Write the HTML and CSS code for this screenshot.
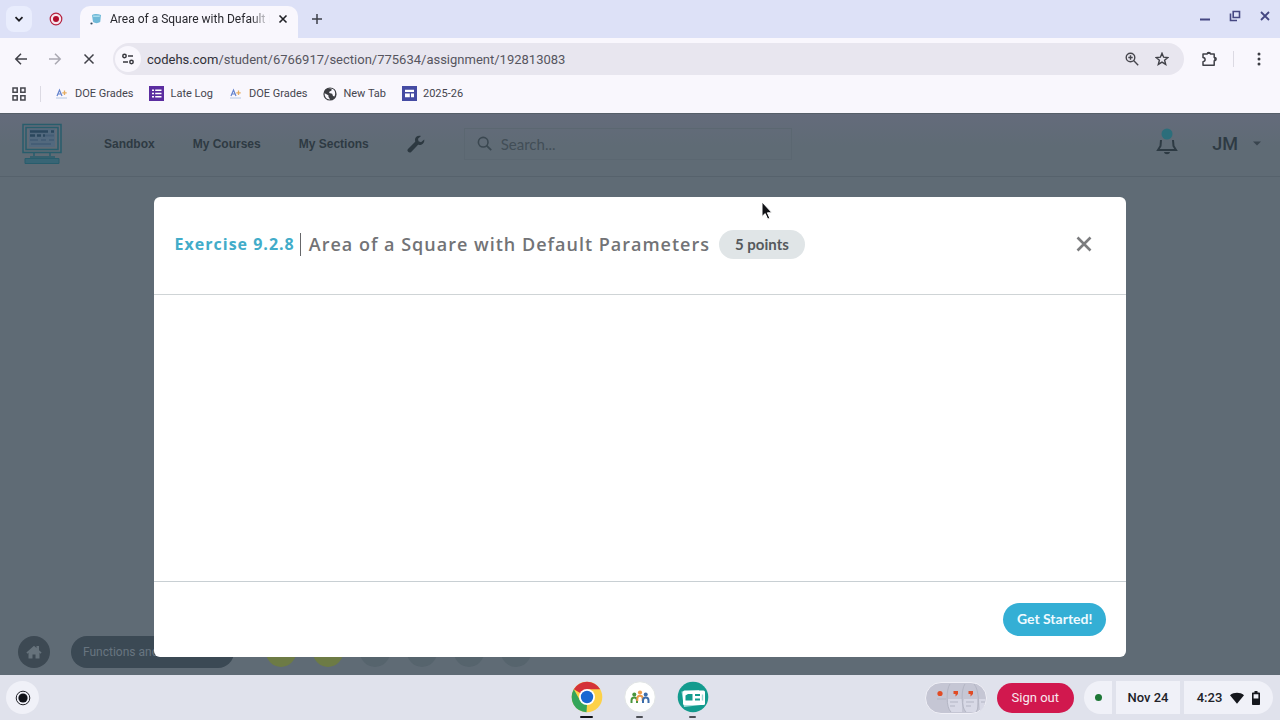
FILE: index.html
```html
<!DOCTYPE html>
<html lang="en">
<head>
<meta charset="utf-8">
<meta name="viewport" content="width=device-width, initial-scale=1">
<title>Area of a Square with Default Parameters</title>
<link rel="stylesheet" href="styles.css">
</head>
<body>
<header class="browser">
  <div class="tabstrip">
    <button class="tab-search" aria-label="Search tabs"><svg width="10" height="10" viewBox="0 0 10 10"><path d="M1.5 3.2 5 6.7 8.5 3.2" fill="none" stroke="#1d1d22" stroke-width="1.7"/></svg></button>
    <button class="pinned" aria-label="Recording"><svg width="14" height="14" viewBox="0 0 14 14"><circle cx="7" cy="7" r="5.8" fill="#f7e6ee" stroke="#b5223f" stroke-width="1.2"/><circle cx="7" cy="7" r="3" fill="#b00d2c"/></svg></button>
    <div class="tab">
      <svg width="12" height="12" viewBox="0 0 12 12"><path d="M2 2.2C4 .8 8 .8 11 2L10.2 9C8 10.5 5 10.5 3 9Z" fill="#70b9d8"/><path d="M3 2.6 10 2.4 9.6 4 3.2 4Z" fill="#a9dcec"/><circle cx="1.5" cy="10.5" r="1.1" fill="#35495c"/></svg>
      <span class="tab-title">Area of a Square with Default Parameters</span>
      <button aria-label="Close tab"><svg width="10" height="10" viewBox="0 0 10 10"><path d="M1.5 1.5 8.5 8.5M8.5 1.5 1.5 8.5" stroke="#202126" stroke-width="1.6"/></svg></button>
    </div>
    <button class="new-tab" aria-label="New tab"><svg width="12" height="12" viewBox="0 0 12 12"><path d="M6 1V11M1 6H11" stroke="#3d3f49" stroke-width="1.5"/></svg></button>
    <div class="window-controls">
      <button aria-label="Minimize"><svg width="12" height="12" viewBox="0 0 12 12"><path d="M1 9.5H11" stroke="#454782" stroke-width="2"/></svg></button>
      <button aria-label="Restore"><svg width="12" height="12" viewBox="0 0 12 12"><path d="M4.2 1.5H10.5V7.5H4.2ZM1.5 3.5V10.5H8" fill="none" stroke="#454782" stroke-width="1.6"/></svg></button>
      <button aria-label="Close"><svg width="12" height="12" viewBox="0 0 12 12"><path d="M2 2 10 10M10 2 2 10" stroke="#454782" stroke-width="1.8"/></svg></button>
    </div>
  </div>
  <div class="toolbar">
    <div class="history">
      <button aria-label="Back"><svg width="14" height="14" viewBox="0 0 14 14"><path d="M13 7H2M7 1.8 1.8 7 7 12.2" fill="none" stroke="#404148" stroke-width="1.5"/></svg></button>
      <button aria-label="Forward"><svg width="14" height="14" viewBox="0 0 14 14"><path d="M1 7H12M7 1.8 12.2 7 7 12.2" fill="none" stroke="#aaa9b2" stroke-width="1.5"/></svg></button>
      <button aria-label="Stop"><svg width="14" height="14" viewBox="0 0 14 14"><path d="M2.5 2.5 11.5 11.5M11.5 2.5 2.5 11.5" stroke="#404148" stroke-width="1.5"/></svg></button>
    </div>
    <div class="omnibox">
      <button class="site-info" aria-label="Site information"><svg width="14" height="14" viewBox="0 0 14 14"><g fill="none" stroke="#38393f" stroke-width="1.5"><circle cx="3.5" cy="4" r="1.7"/><path d="M7 4H12M2 10H7"/><circle cx="10.5" cy="10" r="1.7"/></g></svg></button>
      <p class="url"><b>codehs.com</b>/student/6766917/section/775634/assignment/192813083</p>
      <button aria-label="Zoom"><svg width="14" height="14" viewBox="0 0 14 14"><g fill="none" stroke="#46464d" stroke-width="1.4"><circle cx="5.5" cy="5.5" r="4.3"/><path d="M8.6 8.6 13.2 13.2M5.5 3.3V7.7M3.3 5.5H7.7"/></g></svg></button>
      <button aria-label="Bookmark this tab"><svg width="14" height="14" viewBox="0 0 14 14"><path d="M7 1.3 8.6 5.2 12.9 5.5 9.6 8.2 10.7 12.4 7 10.1 3.3 12.4 4.4 8.2 1.1 5.5 5.4 5.2Z" fill="none" stroke="#404148" stroke-width="1.4"/></svg></button>
    </div>
    <button class="extensions" aria-label="Extensions"><svg width="17" height="16" viewBox="0 0 17 16"><path d="M2 3H6.2C6.2 .9 9.4 .9 9.4 3H13.2V6.5C15.7 6.5 15.7 9.7 13.2 9.7V14.2H2V10.7C4.8 10.4 4.8 6.8 2 6.5Z" fill="none" stroke="#404148" stroke-width="1.5" stroke-linejoin="round"/><path d="M6.3 3C6.3 .6 9.3 .6 9.3 3ZM13.2 6.6C15.8 6.6 15.8 9.6 13.2 9.6Z" fill="#404148"/></svg></button>
    <i class="rule"></i>
    <button class="menu" aria-label="Browser menu"><svg width="4" height="14" viewBox="0 0 4 14" fill="#3c3d43"><circle cx="2" cy="2" r="1.5"/><circle cx="2" cy="7" r="1.5"/><circle cx="2" cy="12" r="1.5"/></svg></button>
  </div>
  <nav class="bookmarks" aria-label="Bookmarks">
    <button class="apps" aria-label="Apps"><svg width="14" height="14" viewBox="0 0 14 14"><path d="M1 1H5.2V5.2H1ZM8.8 1H13V5.2H8.8ZM1 8.8H5.2V13H1ZM8.8 8.8H13V13H8.8Z" fill="none" stroke="#46474e" stroke-width="1.5"/></svg></button>
    <i class="rule"></i>
    <a href="#"><svg width="14" height="14" viewBox="0 0 14 14"><path d="M2 9 4.5 3 7 9M3 7H6" fill="none" stroke="#6483cd" stroke-width="1.2"/><path d="M9.5 3.5V8M7.3 5.8H11.7" stroke="#e5ad62" stroke-width="1.3"/><path d="M1 11H12" stroke="#b4c8e3"/></svg>DOE Grades</a>
    <a href="#"><svg width="15" height="15" viewBox="0 0 15 15"><path fill="#5b2da0" d="M0 0H15V15H0Z"/><path d="M3 4.2H5M6.2 4.2H12.5M3 7.5H5M6.2 7.5H12.5M3 10.8H5M6.2 10.8H12.5" stroke="#fff" stroke-width="1.6"/></svg>Late Log</a>
    <a href="#"><svg width="14" height="14" viewBox="0 0 14 14"><path d="M2 9 4.5 3 7 9M3 7H6" fill="none" stroke="#6483cd" stroke-width="1.2"/><path d="M9.5 3.5V8M7.3 5.8H11.7" stroke="#e5ad62" stroke-width="1.3"/><path d="M1 11H12" stroke="#b4c8e3"/></svg>DOE Grades</a>
    <a href="#"><svg width="14" height="14" viewBox="0 0 14 14"><circle cx="7" cy="7" r="6.6" fill="#3c3d42"/><path d="M1.6 6.2 5.4 8.2 5.5 10 7.2 12.4C4 12.6 1.4 10 1.6 6.2ZM5 2 8.7 1.6 8.4 3.8 6.5 4.4 6.2 6 9.2 6.8 10 9 11.4 9.6C13 6.6 12 3 9.7 2" fill="#f9f7fd"/></svg>New Tab</a>
    <a href="#"><svg width="15" height="15" viewBox="0 0 15 15"><path fill="#454ba3" d="M0 0H15V15H0Z"/><path fill="#fff" d="M3 3.8H12V6H3ZM3 7.5H7.8V11.3H3ZM9 7.5H12V11.3H9Z"/></svg>2025-26</a>
  </nav>
</header>

<main class="page">
  <header class="site-header">
    <a class="logo" href="#" aria-label="CodeHS"><svg width="42" height="42" viewBox="0 0 42 42"><g fill="none" stroke="#285d6c" stroke-width="1.5"><path d="M2 1.5H40V29.5H2ZM5 4.5H37V26.5H5ZM13 30V33M29 30V33M9 34H34"/></g><path d="M8 6H34V24H8Z" fill="#52697e"/><path d="M9 8.5H27M30 8.5H33M9 12.5H14M16 12.5H20M22 12.5H24" stroke="#2b475d" stroke-width="2.4"/><path d="M24 12.5H33M9 17H17M20 17H25M28 17H33M10 21H30" stroke="#455e76" stroke-width="2"/><path d="M4 35.5H38V40.5H4Z" fill="#386575" stroke="#285d6c"/></svg></a>
    <nav class="site-nav" aria-label="Main">
      <a href="#">Sandbox</a>
      <a href="#">My Courses</a>
      <a href="#">My Sections</a>
      <a href="#" aria-label="Tools"><svg width="18" height="18" viewBox="0 0 18 18"><path d="M17.2 4.5 14 7.2 11.5 6.2 11 3.8 14 1.1C11.4-.1 8.1 1.6 8 4.6L8.2 6.8 1 13.9C-.9 16 2.2 18.9 4.2 17L11.1 9.8C14.6 10.6 17.9 8.1 17.2 4.5ZM3 15.8 2 14.9" fill="#2c3840"/></svg></a>
    </nav>
    <label class="search">
      <svg width="15" height="15" viewBox="0 0 15 15"><circle cx="6.2" cy="6.2" r="4.8" fill="none" stroke="#3b4851" stroke-width="1.6"/><path d="M9.6 9.6 14.2 14.2" stroke="#3b4851" stroke-width="1.8"/></svg>
      <input type="search" placeholder="Search..." aria-label="Search">
    </label>
    <button class="alerts" aria-label="Notifications"><svg width="22" height="28" viewBox="0 0 22 28"><path d="M5 12 4.5 18 2 22H20L17.5 18 17 12" fill="none" stroke="#2d3a43" stroke-width="2"/><path d="M8 24H14C13.5 27 8.5 27 8 24Z" fill="#2d3a43"/><circle cx="11" cy="6" r="5.5" fill="#2c6e7b"/></svg></button>
    <button class="account">JM<svg width="8" height="5" viewBox="0 0 8 5"><path d="M0 .5H8L4 4.5Z" fill="#39454e"/></svg></button>
  </header>
  <footer class="lesson-bar">
    <a class="home" href="#" aria-label="Home"><svg width="16" height="14" viewBox="0 0 16 14"><path d="M8 .8 10.5 3V1H13V5.3L15.6 7.5 14.6 8.7 13.5 7.8V13.5H9.5V9.5H6.5V13.5H2.5V7.8L1.4 8.7.4 7.5Z" fill="#66727b"/></svg></a>
    <a class="lesson" href="#">Functions and Parameters</a>
    <div class="steps"><i class="step done"></i><i class="step done"></i><i class="step"></i><i class="step"></i><i class="step"></i><i class="step"></i></div>
  </footer>
  <div class="overlay">
    <section class="modal" role="dialog" aria-labelledby="exercise-title">
      <header class="modal-header">
        <span class="exercise">Exercise 9.2.8</span>
        <h1 id="exercise-title">Area of a Square with Default Parameters</h1>
        <span class="points">5 points</span>
        <button class="dismiss" aria-label="Close dialog"><svg width="16" height="16" viewBox="0 0 16 16"><path d="M1.5 1.5 14.5 14.5M14.5 1.5 1.5 14.5" stroke="#7b7c7e" stroke-width="2.6"/></svg></button>
      </header>
      <div class="modal-body"></div>
      <footer class="modal-footer"><button class="start">Get Started!</button></footer>
    </section>
  </div>
  <svg class="cursor" width="14" height="20" viewBox="0 0 14 20"><path d="M2 1V15.5L5.2 12.6 7.7 18.2 9.8 17.2 7.4 11.8H12Z" fill="#111216" stroke="#fff"/></svg>
</main>

<footer class="shelf">
  <button class="launcher" aria-label="Launcher"><svg width="16" height="16" viewBox="0 0 16 16"><circle cx="8" cy="8" r="6.8" fill="none" stroke="#202128"/><circle cx="8" cy="8" r="4.6" fill="#101218"/></svg></button>
  <div class="shelf-apps">
    <button class="app active" aria-label="Chrome"><svg width="32" height="32" viewBox="0 0 32 32"><circle cx="16" cy="16" r="15.3" fill="#fcd148"/><path d="M16 16 2.8 8.2A15.3 15.3 0 0 1 29.2 8.2H16Z" fill="#d43238"/><path d="M2.8 8.2 9.3 20 16 23.5 15.5 31.3A15.3 15.3 0 0 1 2.8 8.2Z" fill="#34a55a"/><circle cx="16" cy="16" r="8" fill="#fff"/><circle cx="16" cy="16" r="6.2" fill="#1967d2"/></svg></button>
    <button class="app" aria-label="Class tools"><svg width="32" height="32" viewBox="0 0 32 32"><circle cx="16" cy="16" r="15.3" fill="#fff" stroke="#e0e4e5"/><g fill="none" stroke-width="2"><path d="M7.5 22V19.5C7.5 15.5 13 15.5 13 19.5V22" stroke="#4a963d"/><path d="M13.3 20V17.8C13.3 13.8 18.7 13.8 18.7 17.8V20" stroke="#ec9b4a"/><path d="M19 22V19.5C19 15.5 24.5 15.5 24.5 19.5V22" stroke="#3c6dab"/></g><circle cx="10.3" cy="13.4" r="2" fill="#4a963d"/><circle cx="16" cy="11.5" r="2.1" fill="#ec9b4a"/><circle cx="21.7" cy="13.4" r="2" fill="#3c6dab"/></svg></button>
    <button class="app" aria-label="Screencast"><svg width="32" height="32" viewBox="0 0 32 32"><circle cx="16" cy="16" r="15.3" fill="#139b8e"/><path d="M4.5 10.5 22 9 24 24 7 26Z" fill="#a9dfdc"/><rect x="6" y="9.5" width="22" height="14.5" rx="1.5" fill="#fff"/><path d="M8.5 14.5 11 13H15.5V19.5H8.5Z" fill="#139b8e"/><path d="M18 14H23M18 18.5H23" stroke="#139b8e" stroke-width="2"/><path d="M25.5 13.5V19.5" stroke="#9bd6d1" stroke-width="1.4"/></svg></button>
  </div>
  <div class="status">
    <button class="previews" aria-label="Recent files"><svg width="64" height="32" viewBox="0 0 64 32"><rect x=".5" y=".5" width="61" height="31" rx="15.5" fill="#c5c6d4" stroke="#f0f0f7"/><path d="M23 17H37V30H26C23 26 22 22 23 17ZM39 17H52V30H41C38 26 38 22 39 17ZM54 17H60.5C60 24 58 27 55 29Z" fill="#d8d9e6"/><path d="M25 2C21 7 21 26 26 30M40 2C36 7 36 26 41 30M49 2C54 7 55 26 51 30" fill="none" stroke="#b4b6c4"/><path d="M12 17H21M25 20H33M25 24H30M41 20H49M41 24H46M56 20H60" stroke="#b3b5c4"/><g fill="#e14b24"><circle cx="15" cy="11.5" r="2.6"/><path d="M28.5 9H33V12L30.5 14.5V12H28.5ZM43.5 9H48V12L45.5 14.5V12H43.5Z"/></g></svg></button>
    <button class="sign-out">Sign out</button>
    <div class="tray">
      <button class="mic" aria-label="Camera in use"><i></i></button>
      <button class="date">Nov 24</button>
      <button class="clock">4:23<svg width="14" height="12" viewBox="0 0 14 12"><path d="M0 3.2C4 0 10 0 14 3.2L7 11.7Z" fill="#15171d"/></svg><svg width="8" height="14" viewBox="0 0 8 14"><path d="M2.5 0H5.5V1.5H7.2Q8 1.5 8 2.3V13.2Q8 14 7.2 14H.8Q0 14 0 13.2V2.3Q0 1.5.8 1.5H2.5ZM1.6 3.2V7.5H6.4V3.2Z" fill="#15171d" fill-rule="evenodd"/></svg></button>
    </div>
  </div>
</footer>
</body>
</html>
```
FILE: styles.css
```css
* { box-sizing: border-box; }
body {
  margin: 0;
  min-height: 100vh;
  display: flex;
  flex-direction: column;
  font-family: Roboto, "Liberation Sans", sans-serif;
  font-size: 12px;
  color: #45454e;
  background: #f9f7fd;
}
button {
  display: flex;
  align-items: center;
  justify-content: center;
  padding: 0;
  border: 0;
  background: none;
  color: inherit;
  font: inherit;
}
a { color: inherit; text-decoration: none; }
svg { flex: none; display: block; }
.rule { width: 1px; height: 16px; background: #dcdae3; }

/* Browser frame */
.tabstrip {
  display: flex;
  align-items: center;
  height: 38px;
  padding: 0 9px 0 6px;
  background: #dde1f7;
}
.tab-search {
  width: 26px;
  height: 26px;
  border-radius: 8px;
  background: #e9edfd;
}
.pinned { width: 48px; height: 26px; }
.tab {
  align-self: flex-end;
  display: flex;
  align-items: center;
  gap: 8px;
  width: 218px;
  height: 32px;
  padding: 0 10px 6px;
  border-radius: 10px 10px 0 0;
  background: #f9f7fd;
}
.tab-title {
  flex: 1;
  overflow: hidden;
  white-space: nowrap;
  color: #28282e;
  mask-image: linear-gradient(90deg, #000 88%, transparent);
}
.new-tab { width: 38px; height: 26px; }
.window-controls { display: flex; gap: 18px; margin-left: auto; padding-bottom: 6px; }
.toolbar {
  display: flex;
  align-items: center;
  height: 42px;
  padding: 0 19px 0 14px;
}
.history { display: flex; gap: 20px; margin-right: 17px; }
.omnibox {
  flex: 1;
  display: flex;
  align-items: center;
  gap: 16px;
  height: 32px;
  padding: 0 15px 0 2px;
  border-radius: 16px;
  background: #e8e6ef;
}
.site-info { width: 26px; height: 26px; border-radius: 50%; background: #f9f7fd; }
.url { flex: 1; margin: 0 0 0 -10px; font-size: 13px; color: #56555e; }
.url b { font-weight: 400; color: #303038; }
.extensions { margin: 0 15px 0 17px; }
.menu { margin-left: 23px; }
.bookmarks {
  display: flex;
  align-items: center;
  gap: 14px;
  height: 33px;
  padding: 0 12px 6px;
  font-size: 11px;
}
.bookmarks a { display: flex; align-items: center; gap: 6px; }
.bookmarks a + a { margin-left: 2px; }

/* Page behind the dialog */
.page {
  position: relative;
  flex: 1;
  display: flex;
  flex-direction: column;
  justify-content: space-between;
  background: #5f6b75;
  border-top: 1px solid #565f69;
}
.site-header {
  display: flex;
  align-items: center;
  height: 63px;
  padding: 0 19px 3px 21px;
  border-bottom: 1px solid #56626c;
  background: linear-gradient(#646b7b, #5f6b75 32px);
  color: #2e3a43;
}
.site-nav {
  display: flex;
  align-items: center;
  gap: 38px;
  margin-left: 41px;
  font: bold 12px "Liberation Sans", Arial, sans-serif;
}
.search {
  display: flex;
  align-items: center;
  gap: 9px;
  width: 328px;
  height: 32px;
  margin-left: 39px;
  padding: 0 12px;
  border: 1px solid #5b6771;
}
.search input {
  flex: 1;
  min-width: 0;
  padding: 0;
  border: 0;
  outline: 0;
  background: none;
  font: 15px Lato, sans-serif;
}
.search input::placeholder { color: #424e57; opacity: 1; }
.alerts { margin: 0 34px 4px auto; }
.account { gap: 15px; font-size: 18px; font-weight: 500; }
.lesson-bar {
  display: flex;
  align-items: center;
  padding: 0 18px 7px;
}
.home {
  display: flex;
  align-items: center;
  justify-content: center;
  width: 32px;
  height: 32px;
  border-radius: 50%;
  background: #3d4953;
}
.lesson {
  width: 163px;
  margin-left: 21px;
  padding: 0 12px;
  border-radius: 16px;
  background: #3b4954;
  color: #687580;
  line-height: 32px;
  white-space: nowrap;
}
.steps { display: flex; gap: 17px; margin-left: 32px; }
.step { width: 30px; height: 30px; border-radius: 50%; background: #56646d; }
.step.done { background: #6d7b45; }

/* Exercise dialog */
.overlay {
  position: absolute;
  inset: 0;
  display: flex;
  justify-content: center;
  padding: 83px 12% 18px;
}
.modal {
  flex: 1;
  display: flex;
  flex-direction: column;
  border-radius: 6px;
  background: #fff;
  font-family: Lato, sans-serif;
}
.modal-header {
  display: flex;
  align-items: center;
  height: 98px;
  padding: 0 34px 2px 21px;
  border-bottom: 1px solid #cfd4d6;
}
.exercise, .modal h1 {
  font-family: "Open Sans", sans-serif;
  line-height: 23px;
  letter-spacing: 1px;
}
.exercise {
  padding-right: 5px;
  border-right: 1px solid #66676a;
  color: #42acc9;
  font-size: 16px;
  font-weight: 700;
}
.modal h1 {
  margin: 0 9px 0 8px;
  color: #727376;
  font-size: 18px;
  font-weight: 600;
}
.points {
  padding: 0 16px;
  border-radius: 15px;
  background: #e0e5e7;
  color: #55595c;
  font-size: 15px;
  font-weight: 700;
  line-height: 29px;
}
.dismiss { margin: 0 0 2px auto; }
.modal-body { flex: 1; min-height: 120px; }
.modal-footer {
  display: flex;
  align-items: center;
  justify-content: flex-end;
  height: 76px;
  padding: 0 20px;
  border-top: 1px solid #c8cfd3;
}
.start {
  height: 33px;
  padding: 0 14px 2px;
  border-radius: 17px;
  background: #34afd5;
  color: #eefaff;
  font-size: 14px;
  font-weight: 700;
}
.cursor { position: absolute; left: 760px; top: 87px; }

/* System shelf */
.shelf {
  display: grid;
  grid-template-columns: 1fr auto 1fr;
  align-items: center;
  height: 45px;
  padding: 0 7px 0 6px;
  background: #e0e2ec;
}
.launcher { width: 33px; height: 33px; border-radius: 50%; background: #f0f1f8; }
.shelf-apps { display: flex; gap: 21px; align-self: end; }
.app { flex-direction: column; gap: 3px; padding-bottom: 2px; }
.app::after { content: ""; width: 7px; height: 2px; border-radius: 1px; background: #4c4e55; }
.app.active::after { width: 13px; background: #111217; }
.status { display: flex; align-items: center; justify-content: flex-end; gap: 8px; }
.sign-out {
  height: 30px;
  padding: 0 15px;
  border-radius: 15px;
  background: #d1184e;
  color: #f8e8ef;
  font-size: 13px;
}
.tray {
  display: flex;
  gap: 4px;
  height: 33px;
  margin-left: 2px;
  overflow: hidden;
  border-radius: 17px;
  font-size: 13px;
  font-weight: 500;
  color: #202128;
}
.tray button { background: #f0f1f8; }
.mic { width: 28px; }
.mic i { width: 7px; height: 7px; border-radius: 50%; background: #1d7736; }
.date { width: 64px; }
.clock { width: 89px; gap: 8px; }
```
